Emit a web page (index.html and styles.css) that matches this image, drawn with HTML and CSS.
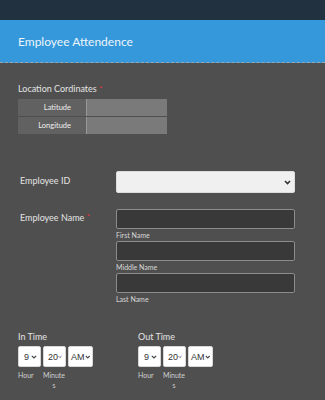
FILE: index.html
```html
<!DOCTYPE html>
<html>
<head>
<meta charset="utf-8">
<link rel="stylesheet" href="styles.css">
</head>
<body>
<div class="topbar"></div>
<div class="header"><h1 class="title">Employee Attendence</h1></div>
<div class="form">
  <div class="loc">
    <div class="label">Location Cordinates <span class="req">*</span></div>
    <div class="matrix">
      <div class="mlabel">Latitude</div><div class="mcell"></div>
      <div class="mlabel">Longitude</div><div class="mcell"></div>
    </div>
  </div>
  <div class="row row-id">
    <div class="rlabel">Employee ID</div>
    <div class="select-light"><span class="chev"><svg width="7" height="5" viewBox="0 0 7 5"><path d="M1 1l2.5 2.5L6 1" fill="none" stroke="#333" stroke-width="1.6"/></svg></span></div>
  </div>
  <div class="row row-name">
    <div class="rlabel">Employee Name <span class="req">*</span></div>
    <div class="names">
      <div class="inp"></div><div class="sub">First Name</div>
      <div class="inp"></div><div class="sub">Middle Name</div>
      <div class="inp"></div><div class="sub">Last Name</div>
    </div>
  </div>
  <div class="times">
    <div class="time">
      <div class="tlabel">In Time</div>
      <div class="sels">
        <div class="sel s1">9<svg class="dd" width="6" height="4" viewBox="0 0 6 4"><path d="M0.8 0.8L3 3l2.2-2.2" fill="none" stroke="#444" stroke-width="1.2"/></svg></div>
        <div class="sel s2">20<svg class="dd" width="6" height="4" viewBox="0 0 6 4"><path d="M0.8 0.8L3 3l2.2-2.2" fill="none" stroke="#444" stroke-width="1.2"/></svg></div>
        <div class="sel s3">AM<svg class="dd" width="6" height="4" viewBox="0 0 6 4"><path d="M0.8 0.8L3 3l2.2-2.2" fill="none" stroke="#444" stroke-width="1.2"/></svg></div>
      </div>
      <div class="subs"><span class="hs">Hour</span><span class="ms">Minute<br>s</span></div>
    </div>
    <div class="time">
      <div class="tlabel">Out Time</div>
      <div class="sels">
        <div class="sel s1">9<svg class="dd" width="6" height="4" viewBox="0 0 6 4"><path d="M0.8 0.8L3 3l2.2-2.2" fill="none" stroke="#444" stroke-width="1.2"/></svg></div>
        <div class="sel s2">20<svg class="dd" width="6" height="4" viewBox="0 0 6 4"><path d="M0.8 0.8L3 3l2.2-2.2" fill="none" stroke="#444" stroke-width="1.2"/></svg></div>
        <div class="sel s3">AM<svg class="dd" width="6" height="4" viewBox="0 0 6 4"><path d="M0.8 0.8L3 3l2.2-2.2" fill="none" stroke="#444" stroke-width="1.2"/></svg></div>
      </div>
      <div class="subs"><span class="hs">Hour</span><span class="ms">Minute<br>s</span></div>
    </div>
  </div>
</div>
</body>
</html>
```
FILE: styles.css
```css
html, body { margin: 0; padding: 0; }
body {
  width: 325px; height: 400px; overflow: hidden;
  background: #4f4f4f;
  font-family: Lato, "Open Sans", sans-serif;
  color: #e6e6e6;
}
.topbar { height: 20px; background: #223140; }
.header {
  height: 42px; background: #3498db;
  display: flex; align-items: center;
  padding-left: 18px;
  border-bottom: 1px dashed #9aa6b0;
}
.title { margin: 0; font-size: 12px; font-weight: 400; color: #eef4fa; }
.form { padding: 0 18px; }
.loc { padding-top: 20px; }
.label { font-size: 9px; line-height: 12px; color: #e4e4e4; margin-bottom: 4px; }
.req { color: #e23030; font-size: 8px; vertical-align: top; }
.matrix {
  display: grid; grid-template-columns: 68px 81px;
  grid-template-rows: 17px 17px; row-gap: 1px;
  width: 149px;
}
.mlabel {
  background: #616161; font-size: 7.5px; color: #eee;
  display: flex; align-items: center; justify-content: flex-end;
  padding-right: 15px;
}
.mcell { background: #7a7a7a; border-left: 1px solid #999; }
.row { display: grid; grid-template-columns: 98px 179px; }
.row-id { margin-top: 37px; height: 22px; align-items: center; }
.rlabel { padding-left: 2px; font-size: 9px; color: #e4e4e4; }
.row-id .rlabel { margin-top: -3px; }
.select-light {
  height: 20px; background: #f0f0f0; border: 1px solid #ddd; border-radius: 2px;
  display: flex; align-items: center; justify-content: flex-end; padding-right: 3px;
}
.chev { display: flex; }
.row-name { margin-top: 16px; }
.row-name .rlabel { padding-top: 3px; }
.inp {
  height: 18px; background: #393939; border: 1px solid #8c8c8c; border-radius: 2px;
}
.sub { font-size: 7px; color: #d8d8d8; height: 12px; line-height: 12px; }
.times { display: flex; margin-top: 26px; }
.time { width: 120px; }
.tlabel { font-size: 9px; color: #e4e4e4; margin-bottom: 4px; }
.sels { display: flex; gap: 2px; }
.sel {
  height: 21px; background: #fff; color: #333; font-family: "Liberation Sans", Arial, sans-serif;
  font-size: 9px; display: flex; align-items: center; justify-content: space-between;
  padding: 0 3px 0 4px; box-sizing: border-box; border-radius: 2px; border: 1px solid #d8d8d8;
}
.s1, .s2 { width: 23px; }
.s1 { padding-left: 5px; }
.s3 { width: 25px; padding-left: 2px; padding-right: 2px; }
.dd { display: block; }
.subs { display: flex; font-size: 7px; color: #cfcfcf; margin-top: 3px; line-height: 10px; }
.hs { width: 24px; }
.ms { text-align: center; width: 24px; }
```
